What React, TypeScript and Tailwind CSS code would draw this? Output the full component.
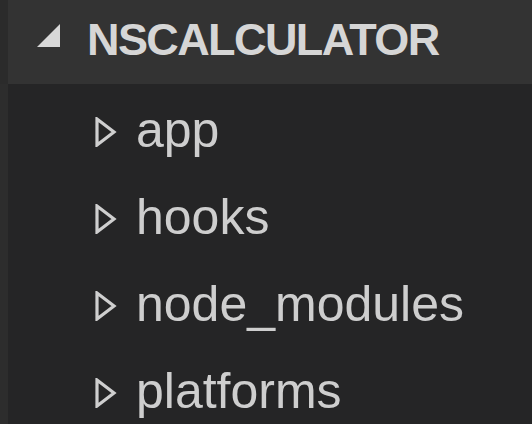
const folders = ['app', 'hooks', 'node_modules', 'platforms'];

function ExpandedArrow() {
  return (
    <svg width="24" height="24" viewBox="0 0 24 24" className="block">
      <polygon points="23,0 23,23 0,23" fill="#d8d8d8" />
    </svg>
  );
}

function CollapsedArrow() {
  return (
    <svg width="22" height="30" viewBox="0 0 22 30" className="block">
      <polygon
        points="2,2 19,15 2,28"
        fill="none"
        stroke="#cfcfcf"
        strokeWidth="3.2"
        strokeLinejoin="miter"
      />
    </svg>
  );
}

export default function App() {
  return (
    <div className="flex h-[424px] w-[532px] overflow-hidden bg-[#252526] font-['Liberation_Sans',Arial,sans-serif]">
      <div className="flex w-[8px] shrink-0 flex-col">
        <div className="h-[84px] shrink-0 bg-[#2b2b2b]" />
        <div className="flex-1 bg-[#2d2d2d]" />
      </div>
      <div className="flex min-w-0 flex-1 flex-col">
        {/* Project header */}
        <div className="flex h-[84px] shrink-0 items-center bg-[#333333]">
          <div className="ml-[29px] -mt-[12px]">
            <ExpandedArrow />
          </div>
          <span className="ml-[26px] -mt-[6px] text-[45px] font-bold leading-none tracking-[-1.6px] text-[#d6d6d6]">
            NSCALCULATOR
          </span>
        </div>

        {/* Folder rows */}
        <div className="flex shrink-0 flex-col pt-[3px]">
          {folders.map((name) => (
            <div key={name} className="flex h-[87px] shrink-0 items-center">
              <div className="ml-[87px] mt-[2px]">
                <CollapsedArrow />
              </div>
              <span className="ml-[19px] text-[50px] leading-[87px] text-[#cecece]">{name}</span>
            </div>
          ))}
        </div>
      </div>
    </div>
  );
}
